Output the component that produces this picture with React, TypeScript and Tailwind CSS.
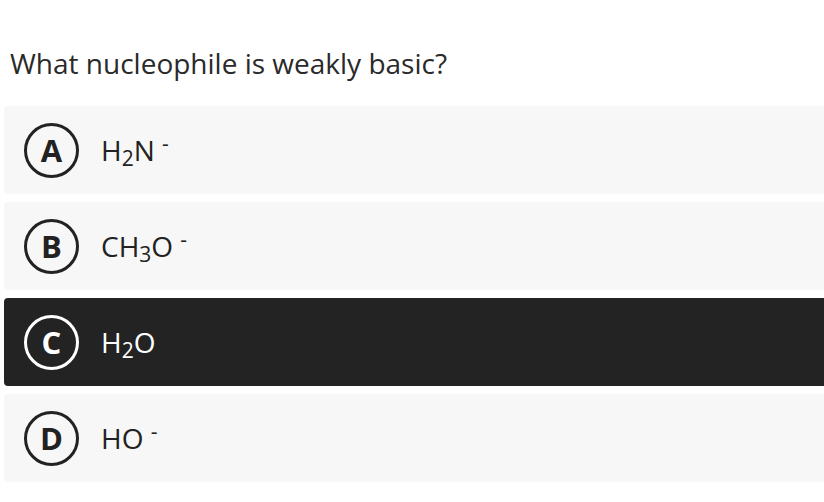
import React from 'react';

type Option = { letter: string; label: React.ReactNode };

const options: Option[] = [
  { letter: 'A', label: <>H<sub>2</sub>N <sup>-</sup></> },
  { letter: 'B', label: <>CH<sub>3</sub>O <sup>-</sup></> },
  { letter: 'C', label: <>H<sub>2</sub>O</> },
  { letter: 'D', label: <>HO <sup>-</sup></> },
];

const selected = 'C';

const OptionRow: React.FC<{ option: Option; active: boolean }> = ({ option, active }) => (
  <div
    className={`flex items-center h-[88px] pl-5 rounded-l ${
      active ? 'bg-[#232323] text-white' : 'bg-[#f7f7f7] text-[#222]'
    }`}
  >
    <div
      className={`w-[55px] h-[55px] rounded-full border-[3px] flex items-center justify-center font-bold text-[31px] ${
        active ? 'border-white' : 'border-[#222]'
      }`}
    >
      {option.letter}
    </div>
    <div className="ml-[22px] text-[28px]">{option.label}</div>
  </div>
);

export default function App() {
  return (
    <div className="w-[824px] h-[502px] bg-white overflow-hidden" style={{ fontFamily: '"Open Sans", sans-serif' }}>
      <h1 className="pl-[10px] pt-[43px] text-[28px] text-[#2a2a2a] leading-[40px]">What nucleophile is weakly basic?</h1>
      <div className="mt-[23px] pl-1 -mr-4 flex flex-col gap-2">
        {options.map((o) => (
          <OptionRow key={o.letter} option={o} active={o.letter === selected} />
        ))}
      </div>
    </div>
  );
}
